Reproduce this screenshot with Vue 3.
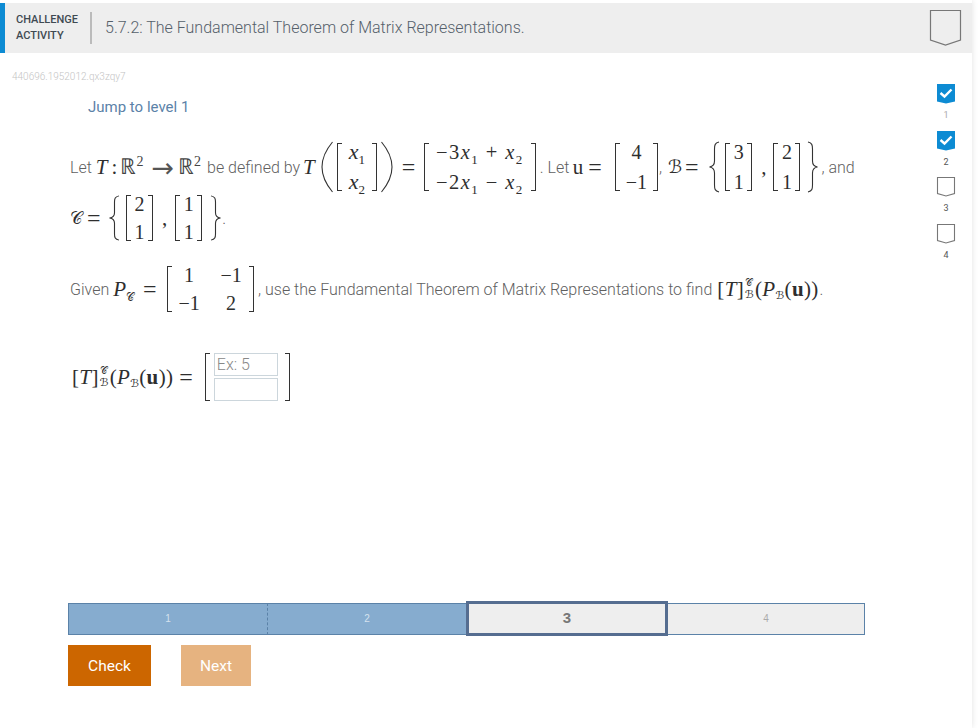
<script setup>
const levels = [
  { n: 1, done: true },
  { n: 2, done: true },
  { n: 3, done: false },
  { n: 4, done: false }
]
const segments = [
  { n: 1, cls: 'filled split' },
  { n: 2, cls: 'filled' },
  { n: 3, cls: 'current' },
  { n: 4, cls: 'todo' }
]
</script>

<template>
  <div class="page">
    <header class="head">
      <div class="tag">CHALLENGE<br />ACTIVITY</div>
      <h1 class="title">5.7.2: The Fundamental Theorem of Matrix Representations.</h1>
      <svg class="shield" width="33" height="38" viewBox="0 0 33 38">
        <path d="M1.5 1.5H31.5V31L16.5 36L1.5 31Z" fill="none" stroke="#777" stroke-width="1.2" />
      </svg>
    </header>

    <div class="body">
      <main class="content">
        <div class="code">440696.1952012.qx3zqy7</div>
        <a class="jump">Jump to level 1</a>

        <div class="line l1">
          <span>Let</span>
          <i class="m t1">T</i>
          <span class="m c1">:</span>
          <span class="m bb r1">ℝ<sup>2</sup></span>
          <span class="m ar">→</span>
          <span class="m bb r2">ℝ<sup>2</sup></span>
          <span class="tx1">be defined by</span>
          <i class="m t2">T</i>
          <svg class="par p1" width="14" height="52" viewBox="0 0 14 52"><path d="M12.5 1C5 10 2 18 2 26C2 34 5 42 12.5 51" /></svg>
          <span class="mat x"><span class="cells"><span><i>x</i><sub>1</sub></span><span><i>x</i><sub>2</sub></span></span></span>
          <svg class="par p2" width="14" height="52" viewBox="0 0 14 52"><path d="M1.5 1C9 10 12 18 12 26C12 34 9 42 1.5 51" /></svg>
          <span class="m eq e1">=</span>
          <span class="mat wide"><span class="cells"><span>−3<i>x</i><sub>1</sub> + <i>x</i><sub>2</sub></span><span>−2<i>x</i><sub>1</sub> − <i>x</i><sub>2</sub></span></span></span>
          <span class="tx2">. Let</span>
          <b class="m u">u</b>
          <span class="m eq e2">=</span>
          <span class="mat u4"><span class="cells"><span>4</span><span>−1</span></span></span>
          <span class="cm">,</span>
          <span class="m cal b1">ℬ</span>
          <span class="m eq e3">=</span>
          <svg class="par br1" width="13" height="52" viewBox="0 0 13 52"><path d="M11 1C7 2 6.500 4 6.500 8V20C6.500 24 5 25.500 1.500 26C5 26.500 6.500 28 6.500 32V44C6.500 48 7 50 11 51" /></svg>
          <span class="mat num"><span class="cells"><span>3</span><span>1</span></span></span>
          <span class="m sep">,</span>
          <span class="mat num"><span class="cells"><span>2</span><span>1</span></span></span>
          <svg class="par br2" width="13" height="52" viewBox="0 0 13 52"><path d="M2 1C6 2 6.500 4 6.500 8V20C6.500 24 8 25.500 11.500 26C8 26.500 6.500 28 6.500 32V44C6.500 48 6 50 2 51" /></svg>
          <span class="tx3">, and</span>
        </div>

        <div class="line l2">
          <span class="m calc cbig">𝒞</span>
          <span class="m eq e4">=</span>
          <svg class="par br3" width="13" height="46" viewBox="0 0 13 52" preserveAspectRatio="none"><path d="M11 1C7 2 6.500 4 6.500 8V20C6.500 24 5 25.500 1.500 26C5 26.500 6.500 28 6.500 32V44C6.500 48 7 50 11 51" /></svg>
          <span class="mat num"><span class="cells"><span>2</span><span>1</span></span></span>
          <span class="m sep s2">,</span>
          <span class="mat num"><span class="cells"><span>1</span><span>1</span></span></span>
          <svg class="par br4" width="13" height="46" viewBox="0 0 13 52" preserveAspectRatio="none"><path d="M2 1C6 2 6.500 4 6.500 8V20C6.500 24 8 25.500 11.500 26C8 26.500 6.500 28 6.500 32V44C6.500 48 6 50 2 51" /></svg>
          <span class="dot">.</span>
        </div>

        <div class="line l3">
          <span>Given</span>
          <span class="m pc"><i>P</i><sub class="calc">𝒞</sub></span>
          <span class="m eq e5">=</span>
          <span class="mat two"><span class="cells grid2"><span>1</span><span>−1</span><span>−1</span><span>2</span></span></span>
          <span class="tx4">, use the Fundamental Theorem of Matrix Representations to find</span>
          <span class="m expr e6">[<i>T</i>]<span class="stack"><span class="calc">𝒞</span><span class="cal">ℬ</span></span>(<i>P</i><sub class="cal">ℬ</sub>(<b>u</b>))</span>
          <span>.</span>
        </div>

        <div class="line l4">
          <span class="m expr e8">[<i>T</i>]<span class="stack"><span class="calc">𝒞</span><span class="cal">ℬ</span></span>(<i>P</i><sub class="cal">ℬ</sub>(<b>u</b>))</span>
          <span class="m eq e7">=</span>
          <span class="mat ans">
            <span class="cells">
              <input class="box" type="text" placeholder="Ex: 5" />
              <input class="box" type="text" />
            </span>
          </span>
        </div>

        <div class="bar">
          <div v-for="s in segments" :key="s.n" class="seg" :class="s.cls">{{ s.n }}</div>
        </div>

        <div class="actions">
          <button class="btn check">Check</button>
          <button class="btn next">Next</button>
        </div>
      </main>

      <aside class="levels">
        <div v-for="l in levels" :key="l.n" class="level">
          <svg width="20" height="21" viewBox="0 0 20 21">
            <template v-if="l.done">
              <path d="M1 1H19V18.500L10 20.500L1 18.500Z" fill="#0d8bd3" />
              <path d="M4.500 10L8.500 13.500L15.500 6.500" fill="none" stroke="#fff" stroke-width="2.400" />
            </template>
            <path v-else d="M1.500 1.500H18.500V17.500L10 20L1.500 17.500Z" fill="none" stroke="#777" stroke-width="1.100" />
          </svg>
          <span class="lnum" :class="{ faded: l.n === 1 }">{{ l.n }}</span>
        </div>
      </aside>
    </div>
  </div>
</template>

<style>
html, body { margin: 0; background: #fff; }
</style>

<style scoped>
.page {
  width: 972px;
  height: 725px;
  padding-top: 3px;
  background: #fff;
  box-shadow: 0 0 6px rgba(0, 0, 0, 0.12);
  font-family: Roboto, "Liberation Sans", sans-serif;
  font-weight: 300;
  font-size: 16px;
  color: #5f5f5f;
  overflow: hidden;
}
.head {
  height: 50px;
  box-sizing: border-box;
  background: #eee;
  border-left: 5px solid #0d8bd3;
  display: flex;
  align-items: center;
}
.tag {
  width: 74px;
  padding-left: 11px;
  font-size: 11px;
  font-weight: 500;
  line-height: 16.500px;
  color: #3f4a52;
}
.title {
  margin: 0;
  height: 32px;
  padding-left: 13px;
  border-left: 2px solid #bbb;
  font-size: 16px;
  font-weight: 300;
  line-height: 32px;
  color: #55606a;
  flex: 1;
}
.shield { margin-right: 10px; }
.body { display: flex; }
.content { width: 930px; }
.code {
  padding: 16px 0 0 12px;
  height: 16px;
  line-height: 16px;
  font-size: 10px;
  color: #c4c4c4;
}
.jump {
  display: block;
  margin: 12px 0 0 88px;
  height: 20px;
  line-height: 20px;
  font-size: 15px;
  font-weight: 400;
  color: #5b82a8;
}
.line {
  display: flex;
  align-items: center;
  padding-left: 70px;
  white-space: nowrap;
}
.l1 { height: 56px; margin-top: 22px; }
.l2 { height: 46px; }
.l3 { height: 52px; margin-top: 22px; }
.l4 { height: 52px; margin-top: 36px; }
.m {
  font-family: "Liberation Serif", "DejaVu Serif", serif;
  font-size: 21px;
  font-weight: 400;
  color: #2e2e2e;
  line-height: 1;
}
.m sup, .m sub { font-size: 13px; line-height: 0; }
.bb { font-family: "DejaVu Sans", sans-serif; font-size: 22px; font-weight: 300; color: #444; }
.bb sup { font-size: 14px; font-family: "Liberation Serif", serif; }
.cal { font-family: "DejaVu Sans", "Noto Sans", serif; font-style: italic; }
.calc { font-size: 17px; font-style: normal; }
.t1 { margin-left: 4px; }
.c1 { margin-left: 4px; }
.r1 { margin-left: 3px; }
.ar { margin-left: 8px; font-family: "DejaVu Sans", sans-serif; font-size: 27px; color: #555; }
.r2 { margin-left: 4px; }
.tx1 { margin-left: 6px; }
.t2 { margin-left: 3px; }
.p1 { margin-left: 5px; }
.p2 { margin-left: 3px; }
.par { flex: none; }
.par path { fill: none; stroke: #333; stroke-width: 1.100; }
.mat {
  display: inline-flex;
  align-items: stretch;
  flex: none;
  box-sizing: border-box;
  height: 48px;
  font-family: "Liberation Serif", "DejaVu Serif", serif;
  font-size: 20px;
  font-weight: 400;
  color: #2e2e2e;
}
.mat::before, .mat::after {
  content: "";
  flex: none;
  width: 5px;
  box-sizing: border-box;
  border: solid #333;
  border-width: 1px 0 1px 1.200px;
}
.mat::after { border-width: 1px 1.200px 1px 0; }
.mat sub { font-size: 13px; line-height: 0; }
.cells {
  display: flex;
  flex-direction: column;
  justify-content: space-between;
  align-items: center;
  line-height: 18px;
  flex: none;
}
.x { margin-left: 3px; }
.x .cells { width: 30px; font-size: 22px; }
.eq { font-size: 24px; }
.e1 { margin: 0 8.500px 0 8px; }
.wide .cells { width: 102px; letter-spacing: 1.400px; font-size: 20.500px; }
.tx2 { margin-left: 4px; width: 31px; }
.u { margin-left: 2px; }
.e2 { margin: 0 13px 0 5px; }
.u4 .cells { width: 33px; }
.cm { margin-left: 1px; }
.b1 { margin-left: 6px; font-size: 18px; }
.e3 { margin: 0 9.500px 0 3px; }
.br1 { margin-right: 4px; }
.num .cells { width: 17px; }
.sep { margin: 0 7px 0 9px; }
.br2 { margin-left: 6px; }
.tx3 { margin-left: 2px; }
.l2 .mat { height: 46px; }
.cbig { width: 16px; }
.e4 { margin: 0 7.500px 0 1px; }
.br3 { margin-right: 5px; }
.s2 { margin: 0 8px 0 9px; }
.br4 { margin-left: 7px; }
.pc { margin-left: 4px; }
.pc sub { font-size: 11px; }
.e5 { margin: 0 10.500px 0 9px; }
.two { height: 46px; }
.grid2 {
  display: grid;
  grid-template-columns: 34px 43px;
  align-content: space-between;
  justify-items: center;
  width: 77px;
}
.grid2 span:nth-child(even) { padding-left: 7px; }
.tx4 { margin-left: 4px; }
.e6 { margin: 0 1px 0 5px; }
.e8 { margin-left: 2px; }
.expr { display: inline-flex; align-items: center; letter-spacing: 0.350px; }
.expr sub { font-size: 11px; align-self: flex-end; line-height: 12px; }
.expr sub.cal { margin-bottom: -1px; }
.stack {
  display: inline-flex;
  flex-direction: column;
  font-size: 11px;
  line-height: 12px;
  margin: 0 1px;
}
.stack .calc { font-size: 9.500px; }
.e7 { margin: 0 12px 0 6px; }
.ans .cells { box-sizing: border-box; padding: 0 7px 0 4px; width: 75px; }
.box {
  box-sizing: border-box;
  display: block;
  flex: none;
  width: 64px;
  height: 23px;
  padding: 0 2px;
  border: 1px solid #ccd6dc;
  background: #fff;
  font-family: Roboto, sans-serif;
  font-size: 16px;
  font-weight: 300;
  outline: none;
}
.box::placeholder { color: #888; opacity: 1; }
.bar {
  display: flex;
  align-items: flex-end;
  margin: 198px 0 0 68px;
  width: 797px;
  height: 35px;
}
.seg {
  box-sizing: border-box;
  height: 32px;
  margin-bottom: 1px;
  line-height: 30px;
  text-align: center;
  font-family: "Liberation Sans", sans-serif;
  font-weight: 400;
  font-size: 10px;
}
.filled {
  flex: none;
  width: 198px;
  background: #86accf;
  border: solid #5b82a8;
  border-width: 1px 0;
  color: #d5e2ee;
}
.filled:first-child { width: 200px; border-left: 1px solid #5b82a8; }
.split { border-right: 1px dashed #5b82a8; }
.current {
  flex: none;
  width: 202px;
  height: 35px;
  margin-bottom: 0;
  line-height: 27px;
  background: #eee;
  border: 3px solid #556d90;
  color: #777;
  font-weight: 700;
  font-size: 15px;
}
.todo {
  flex: none;
  width: 197px;
  background: #eee;
  border: solid #5b82a8;
  border-width: 1px 1px 1px 0;
  color: #aaa;
}
.actions { display: flex; gap: 30px; margin: 9px 0 0 68px; }
.btn {
  height: 41px;
  border: 0;
  padding: 0;
  color: #fff;
  font-family: Roboto, sans-serif;
  font-size: 15.500px;
  font-weight: 400;
}
.check { width: 83px; background: #cc6600; }
.next { width: 70px; background: #e6b380; }
.levels {
  width: 32px;
  padding-top: 30px;
  display: flex;
  flex-direction: column;
  align-items: center;
}
.level {
  height: 46.500px;
  display: flex;
  flex-direction: column;
  align-items: center;
}
.level svg { display: block; }
.lnum {
  margin-top: 5px;
  font-size: 9px;
  line-height: 12px;
  font-weight: 400;
  color: #555;
}
.lnum.faded { color: #aaa; }
</style>
